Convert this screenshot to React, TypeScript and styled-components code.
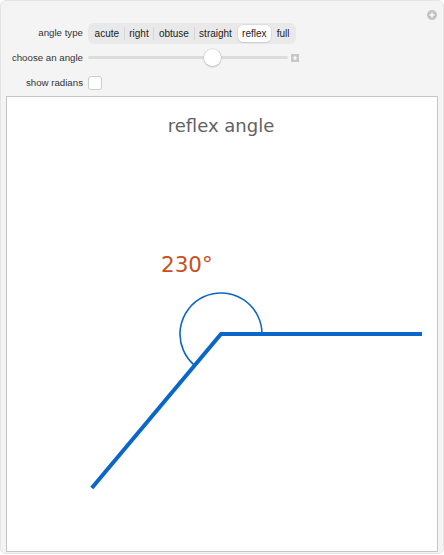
import React from 'react'
import styled, { createGlobalStyle } from 'styled-components';

const GlobalStyle = createGlobalStyle`
    body {
        margin: 0;
        background: #ffffff;
        font-family: "Liberation Sans", Arial, sans-serif;
    }
`

const SPanel = styled.div`
    position: relative;
    box-sizing: border-box;
    width: 444px;
    height: 554px;
    padding: 19px 5px 5px 5px;
    background: #f4f4f4;
    border: 1px solid #e4e4e4;
    border-radius: 6px;
    display: flex;
    flex-direction: column;
`

const SCornerBtn = styled.div`
    position: absolute;
    top: 9px;
    right: 6px;
    width: 10px;
    height: 10px;
    border-radius: 50%;
    background: #c2c2c2;
    display: flex;
    align-items: center;
    justify-content: center;
`

const SControls = styled.div`
    display: grid;
    grid-template-columns: 82px 1fr;
    grid-auto-rows: 25px;
    column-gap: 5px;
    margin-left: -5px;
    margin-bottom: 1px;
`

const SLabel = styled.div`
    display: flex;
    align-items: center;
    justify-content: flex-end;
    font-size: 9.7px;
    color: #333333;
    white-space: nowrap;
`

const SCell = styled.div`
    display: flex;
    align-items: center;
`

const SSegments = styled.div`
    display: flex;
    align-items: center;
    height: 21px;
    padding: 0 2px;
    box-sizing: border-box;
    background: #e9e9e9;
    border-radius: 6px;
    margin-top: 1px;
`

const SSegment = styled.div<{ $active: boolean }>`
    height: 17px;
    line-height: 17px;
    padding: 0 4.6px;
    font-size: 10px;
    color: #222222;
    border-radius: 5px;
    background: ${p => p.$active ? '#ffffff' : 'transparent'};
    box-shadow: ${p => p.$active ? '0 0 0 0.5px #d0d0d0, 0 1px 1px rgba(0,0,0,0.12)' : 'none'};
`

const SDivider = styled.div<{ $hidden: boolean }>`
    width: 1px;
    height: 13px;
    background: ${p => p.$hidden ? 'transparent' : '#d6d6d6'};
`

const SSliderWrap = styled.div`
    display: flex;
    align-items: center;
    gap: 3px;
`

const STrack = styled.div`
    position: relative;
    width: 200px;
    height: 3px;
    border-radius: 2px;
    background: #dcdcdc;
`

const SThumb = styled.div`
    position: absolute;
    top: -7px;
    width: 17px;
    height: 17px;
    border-radius: 50%;
    background: #ffffff;
    box-shadow: 0 0 0 0.5px #c8c8c8, 0 1px 2px rgba(0,0,0,0.25);
`

const SSmallPlus = styled.div`
    width: 8px;
    height: 8px;
    background: #c8c8c8;
    display: flex;
    align-items: center;
    justify-content: center;
`

const SCheckbox = styled.div`
    width: 14px;
    height: 14px;
    box-sizing: border-box;
    background: #ffffff;
    border: 1px solid #cdcdcd;
    border-radius: 3px;
`

const SPlot = styled.div`
    flex: 1;
    background: #ffffff;
    border: 1px solid #c6c6c6;
`

const types = ['acute', 'right', 'obtuse', 'straight', 'reflex', 'full']
const selected = 'reflex'
const angle = 230

function AngleFigure({ deg }: { deg: number }) {
    const cx = 214
    const cy = 237
    const r = 41
    const rad = deg * Math.PI / 180
    const ex = cx + r * Math.cos(rad)
    const ey = cy - r * Math.sin(rad)
    const len = 201
    const rx = cx + len * Math.cos(rad)
    const ry = cy - len * Math.sin(rad)
    return (
        <svg width="430" height="450" viewBox="0 0 430 450">
            <text x="214" y="35" textAnchor="middle" fontFamily="'DejaVu Sans', sans-serif" fontSize="18" fill="#626262">
                reflex angle
            </text>
            <text x="154" y="175" fontFamily="'DejaVu Sans', sans-serif" fontSize="21.5" fill="#c8501c">
                {deg}°
            </text>
            <path d={`M ${cx + r} ${cy} A ${r} ${r} 0 ${deg > 180 ? 1 : 0} 0 ${ex} ${ey}`} fill="none" stroke="#0b66c8" strokeWidth="1.6" />
            <polyline points={`415,${cy} ${cx},${cy} ${rx},${ry}`} fill="none" stroke="#0a66c9" strokeWidth="4" strokeLinejoin="miter" />
        </svg>
    )
}

function App() {
    const thumbLeft = (211 - 87) - 8.5
    const activeIdx = types.indexOf(selected)
    return (
        <>
            <GlobalStyle />
            <SPanel>
                <SCornerBtn>
                    <svg width="6" height="6" viewBox="0 0 6 6">
                        <path d="M3 0.5 V5.5 M0.5 3 H5.5" stroke="#fff" strokeWidth="1.5" />
                    </svg>
                </SCornerBtn>
                <SControls>
                    <SLabel>angle type</SLabel>
                    <SCell>
                        <SSegments>
                            {types.map((t, i) => (
                                <React.Fragment key={t}>
                                    {i > 0 && <SDivider $hidden={i === activeIdx || i - 1 === activeIdx} />}
                                    <SSegment $active={t === selected}>{t}</SSegment>
                                </React.Fragment>
                            ))}
                        </SSegments>
                    </SCell>
                    <SLabel>choose an angle</SLabel>
                    <SCell>
                        <SSliderWrap>
                            <STrack>
                                <SThumb style={{ left: thumbLeft }} />
                            </STrack>
                            <SSmallPlus>
                                <svg width="6" height="6" viewBox="0 0 6 6">
                                    <path d="M3 1 V5 M1 3 H5" stroke="#fff" strokeWidth="1.2" />
                                </svg>
                            </SSmallPlus>
                        </SSliderWrap>
                    </SCell>
                    <SLabel>show radians</SLabel>
                    <SCell>
                        <SCheckbox />
                    </SCell>
                </SControls>
                <SPlot>
                    <AngleFigure deg={angle} />
                </SPlot>
            </SPanel>
        </>
    )
}

export default App
